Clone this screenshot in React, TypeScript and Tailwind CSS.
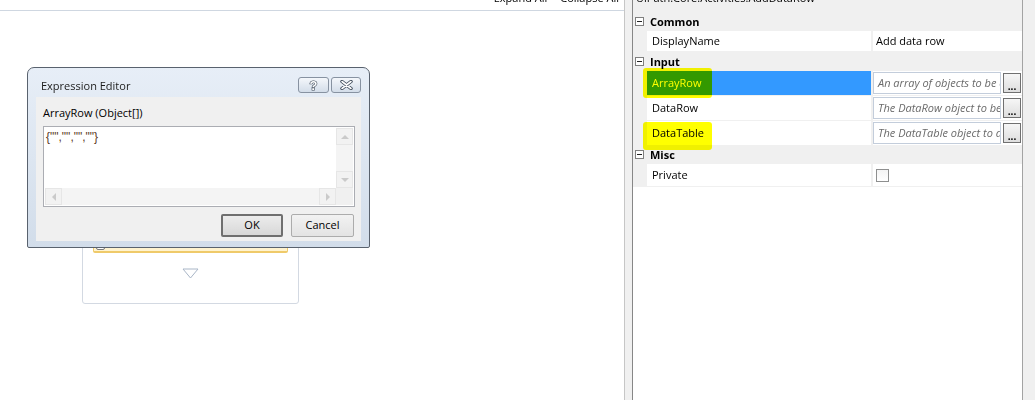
import React from "react";

function MinusBox() {
  return (
    <span className="flex h-[9px] w-[9px] items-center justify-center border border-[#7f7f7f] bg-white">
      <span className="h-px w-[5px] bg-[#222]" />
    </span>
  );
}

function Category({ label }: { label: string }) {
  return (
    <div className="flex h-[19px] items-center">
      <div className="flex w-[14px] pl-[2px]">
        <MinusBox />
      </div>
      <span className="pl-[3px] font-bold leading-[15px]">{label}</span>
    </div>
  );
}

function EditorValue({ hint }: { hint: string }) {
  return (
    <div className="flex flex-1 items-center gap-[2px] bg-white">
      <div className="flex h-[22px] w-[128px] items-center overflow-hidden whitespace-nowrap border border-[#c3cddb] pl-[4px] italic text-[#6a6a6a]">
        {hint}
      </div>
      <div className="flex h-[20px] w-[18px] items-end justify-center border border-[#707070] bg-linear-to-b from-[#f6f6f6] to-[#dedede] pb-[1px] text-[10px] font-bold leading-[10px]">
        ...
      </div>
    </div>
  );
}

function Arrow({ dir }: { dir: "up" | "down" | "left" | "right" }) {
  const pts = {
    up: "0,4 4,0 8,4",
    down: "0,0 8,0 4,4",
    left: "4,0 4,8 0,4",
    right: "0,0 0,8 4,4",
  }[dir];
  const vertical = dir === "up" || dir === "down";
  return (
    <svg width={vertical ? 8 : 4} height={vertical ? 4 : 8}>
      <polygon points={pts} fill="#cacaca" />
    </svg>
  );
}

function ScrollButton({ dir }: { dir: "up" | "down" | "left" | "right" }) {
  return (
    <div className="flex h-[17px] w-[17px] items-center justify-center border border-[#e6e6e6] bg-[#f2f2f2]">
      <Arrow dir={dir} />
    </div>
  );
}

function ExpressionEditor() {
  return (
    <div className="absolute left-[27px] top-[67px] z-20 flex h-[181px] w-[343px] flex-col rounded-t-[7px] rounded-b-[2px] border border-[#59626e] bg-linear-to-b from-[#e7eef7] to-[#d2ddea] px-[8px] pb-[6px]">
      {/* title bar */}
      <div className="flex h-[29px] items-start">
        <span className="mt-[10px] pl-[5px] leading-[15px] text-[#1c1c1c]">Expression Editor</span>
        <div className="ml-auto mt-[9px] flex gap-[2px]">
          <div className="flex h-[16px] w-[31px] items-center justify-center rounded-[3px] border border-[#8792a1] bg-linear-to-b from-[#f4f7fb] to-[#d3dde9]">
            <span className="font-['Liberation_Sans',sans-serif] text-[13px] font-bold leading-[13px] text-white [-webkit-text-stroke:1.2px_#3c4857] [paint-order:stroke_fill]">?</span>
          </div>
          <div className="flex h-[16px] w-[30px] items-center justify-center rounded-[3px] border border-[#8792a1] bg-linear-to-b from-[#f4f7fb] to-[#d3dde9]">
            <svg width="13" height="10" viewBox="0 0 13 10">
              <path d="M2 1.5 L11 8.5 M11 1.5 L2 8.5" stroke="#3c4857" strokeWidth="3.4" strokeLinecap="round" />
              <path d="M2 1.5 L11 8.5 M11 1.5 L2 8.5" stroke="#ffffff" strokeWidth="1.6" strokeLinecap="round" />
            </svg>
          </div>
        </div>
      </div>

      {/* client area */}
      <div className="flex flex-1 flex-col bg-[#f0f0f0] pl-[7px]">
        <div className="pt-[8px] leading-[16px]">ArrayRow (Object[])</div>
        <div className="mt-[5px] flex h-[81px] w-[312px] flex-col border border-[#abadb3] bg-white p-px">
          <div className="flex flex-1">
            <div className="flex-1 pl-px pt-[2px] font-['Liberation_Sans',sans-serif] text-[12px] leading-[14px] text-[#5a3a1e]">
              {'{"","","",""}'}
            </div>
            <div className="flex w-[17px] flex-col justify-between bg-[#f4f4f4]">
              <ScrollButton dir="up" />
              <ScrollButton dir="down" />
            </div>
          </div>
          <div className="flex h-[17px]">
            <div className="flex flex-1 justify-between bg-[#f4f4f4]">
              <ScrollButton dir="left" />
              <ScrollButton dir="right" />
            </div>
            <div className="w-[17px] bg-[#f0f0f0]" />
          </div>
        </div>
        <div className="mt-[7px] flex justify-end gap-[8px] pr-[7px]">
          <div className="flex h-[23px] w-[62px] items-center justify-center rounded-[2px] border-2 border-[#6f6f6f] bg-linear-to-b from-[#ececec] to-[#d8d8d8]">
            OK
          </div>
          <div className="flex h-[23px] w-[63px] items-center justify-center rounded-[2px] border border-[#acacac] bg-linear-to-b from-[#f2f2f2] to-[#e3e3e3]">
            Cancel
          </div>
        </div>
      </div>
    </div>
  );
}

function Canvas() {
  return (
    <div className="flex w-[625px] flex-col border-r border-[#c6c6c6] bg-white">
      <div className="flex h-[11px] justify-end gap-[13px] overflow-hidden border-b border-[#cfd7e1] pr-[5px]">
        <span className="-mt-[10px] leading-[15px]">Expand All</span>
        <span className="-mt-[10px] leading-[15px]">Collapse All</span>
      </div>
      {/* activity card partly covered by the dialog */}
      <div className="ml-[82px] mt-[189px] flex w-[217px] flex-col items-center rounded-b-[3px] border border-[#d3d9e2] pb-[24px] pt-[14px]">
        <div className="flex h-[38px] w-[195px] items-end rounded-[2px] border border-b-2 border-[#efca6a] bg-[#fff3cf] pl-[2px]">
          <span className="mb-px h-[12px] w-[9px] rounded-[2px] border border-[#7a7a7a] bg-white" />
        </div>
        <svg className="mt-[15px]" width="17" height="11" viewBox="0 0 17 11">
          <polygon points="1,1 16,1 8.5,10" fill="none" stroke="#a9b6c7" strokeWidth="1" />
        </svg>
      </div>
    </div>
  );
}

function PropertyPanel() {
  return (
    <div className="flex w-[391px] flex-col border-x border-l-[#878787] border-r-[#a3a3a3] bg-white">
      <div className="bg-[#f0f0f0]">
        <div className="h-[12px] overflow-hidden pl-[3px]">
          <div className="-mt-[10px] leading-[15px]">UiPath.Core.Activities.AddDataRow</div>
        </div>

        <Category label="Common" />
        <div className="flex h-[20px] pl-[14px]">
          <div className="flex w-[224px] items-center bg-white pl-[5px]">DisplayName</div>
          <div className="ml-[2px] flex flex-1 items-center bg-white pl-[3px]">Add data row</div>
        </div>

        <div className="mt-px">
          <Category label="Input" />
        </div>
        <div className="flex h-[24px] pl-[14px]">
          <div className="relative flex w-[224px] items-center bg-[#3399ff] pl-[5px] text-white">
            ArrayRow
            <span className="absolute -left-[4px] -top-[3px] z-10 h-[30px] w-[69px] rounded-[3px] bg-[#ffff00] mix-blend-multiply" />
          </div>
          <div className="ml-[2px] flex flex-1">
            <EditorValue hint="An array of objects to be added to the DataTable" />
          </div>
        </div>
        <div className="mt-px flex h-[24px] pl-[14px]">
          <div className="flex w-[224px] items-center bg-white pl-[5px]">DataRow</div>
          <div className="ml-[2px] flex flex-1">
            <EditorValue hint="The DataRow object to be added" />
          </div>
        </div>
        <div className="mt-px flex h-[24px] pl-[14px]">
          <div className="relative flex w-[224px] items-center bg-white pl-[5px]">
            DataTable
            <span className="absolute -left-[4px] top-[1px] z-10 h-[28px] w-[69px] rounded-[3px] bg-[#ffff00] mix-blend-multiply" />
          </div>
          <div className="ml-[2px] flex flex-1">
            <EditorValue hint="The DataTable object to add the row to" />
          </div>
        </div>

        <Category label="Misc" />
        <div className="flex h-[22px] pl-[14px]">
          <div className="flex w-[224px] items-center bg-white pl-[5px]">Private</div>
          <div className="ml-[2px] flex flex-1 items-center bg-white pl-[3px]">
            <span className="h-[13px] w-[13px] border border-[#8e8f8f] bg-linear-to-b from-[#f4f4f4] to-white" />
          </div>
        </div>
        <div className="h-px" />
      </div>
      <div className="flex-1 bg-white" />
    </div>
  );
}

export default function App() {
  return (
    <div className="relative flex h-[400px] w-[1035px] overflow-hidden bg-white font-['Open_Sans',sans-serif] text-[11px] text-black">
      <Canvas />
      <div className="w-[7px] bg-[#f0f0f0]" />
      <PropertyPanel />
      <div className="w-[12px] bg-[#f0f0f0]" />
      <ExpressionEditor />
    </div>
  );
}
